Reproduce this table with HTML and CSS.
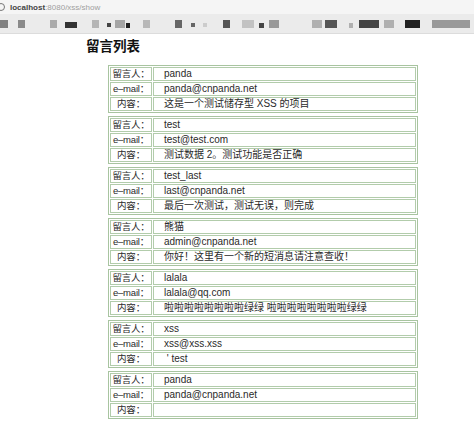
FILE: index.html
```html
<!DOCTYPE html>
<html lang="zh">
<head>
<meta charset="utf-8">
<title>留言列表</title>
<link rel="stylesheet" href="styles.css">
</head>
<body>
<div class="chrome">
  <div class="addr">
    <span class="globe"></span>
    <span class="host">localhost</span><span class="path">:8080/xss/show</span>
  </div>
  <div class="bookmarks">
    <span class="bm b1"></span><span class="bm b2"></span><span class="bm b3"></span><span class="bm b4"></span>
    <span class="bm b5"></span><span class="bm b6"></span><span class="bm b7"></span><span class="bm b8"></span>
    <span class="bm b9"></span><span class="bm b10"></span><span class="bm b11"></span><span class="bm b12"></span>
    <span class="bm b13"></span><span class="bm b14"></span><span class="bm b15"></span><span class="bm b16"></span>
    <span class="bm b17"></span><span class="bm b18"></span><span class="bm b19"></span><span class="bm b20"></span>
    <span class="bm b21"></span><span class="bm b22"></span><span class="bm b23"></span>
  </div>
</div>
<main class="page">
  <h1 class="title">留言列表</h1>
  <div class="list">
    <table class="msg">
      <tr><td class="lab">留言人：</td><td class="val">panda</td></tr>
      <tr><td class="lab">e–mail：</td><td class="val">panda@cnpanda.net</td></tr>
      <tr><td class="lab">内容：</td><td class="val">这是一个测试储存型 XSS 的项目</td></tr>
    </table>
    <table class="msg">
      <tr><td class="lab">留言人：</td><td class="val">test</td></tr>
      <tr><td class="lab">e–mail：</td><td class="val">test@test.com</td></tr>
      <tr><td class="lab">内容：</td><td class="val">测试数据 2。测试功能是否正确</td></tr>
    </table>
    <table class="msg">
      <tr><td class="lab">留言人：</td><td class="val">test_last</td></tr>
      <tr><td class="lab">e–mail：</td><td class="val">last@cnpanda.net</td></tr>
      <tr><td class="lab">内容：</td><td class="val">最后一次测试，测试无误，则完成</td></tr>
    </table>
    <table class="msg">
      <tr><td class="lab">留言人：</td><td class="val">熊猫</td></tr>
      <tr><td class="lab">e–mail：</td><td class="val">admin@cnpanda.net</td></tr>
      <tr><td class="lab">内容：</td><td class="val">你好！这里有一个新的短消息请注意查收！</td></tr>
    </table>
    <table class="msg">
      <tr><td class="lab">留言人：</td><td class="val">lalala</td></tr>
      <tr><td class="lab">e–mail：</td><td class="val">lalala@qq.com</td></tr>
      <tr><td class="lab">内容：</td><td class="val">啦啦啦啦啦啦啦啦绿绿 啦啦啦啦啦啦啦啦绿绿</td></tr>
    </table>
    <table class="msg">
      <tr><td class="lab">留言人：</td><td class="val">xss</td></tr>
      <tr><td class="lab">e–mail：</td><td class="val">xss@xss.xss</td></tr>
      <tr><td class="lab">内容：</td><td class="val">&nbsp;' test</td></tr>
    </table>
    <table class="msg">
      <tr><td class="lab">留言人：</td><td class="val">panda</td></tr>
      <tr><td class="lab">e–mail：</td><td class="val">panda@cnpanda.net</td></tr>
      <tr><td class="lab">内容：</td><td class="val"></td></tr>
    </table>
  </div>
</main>
</body>
</html>
```
FILE: styles.css
```css
html, body {
  margin: 0;
  padding: 0;
  background: #ffffff;
  font-family: "Liberation Sans", "Noto Sans CJK SC", sans-serif;
  color: #2a2a2a;
}

.chrome {
  background: #ebebeb;
  border-bottom: 1px solid #dcdcdc;
}

.addr {
  height: 14px;
  display: flex;
  align-items: center;
  background: #f5f5f5;
  font-size: 8px;
  padding-left: 1px;
}

.globe {
  width: 6px;
  height: 6px;
  border: 1px solid #777;
  border-radius: 50%;
  margin-left: -4px;
  margin-right: 5px;
}

.host {
  color: #444;
  font-weight: bold;
}

.path {
  color: #a0a0a0;
}

.bookmarks {
  position: relative;
  height: 19px;
  filter: blur(0.5px);
}

.bm {
  position: absolute;
  top: 6px;
  width: 7px;
  height: 8px;
  background: #9a9a9a;
}

.b1 { left: 0; width: 8px; background: #808080; }
.b2 { left: 18px; background: #8a8a8a; }
.b3 { left: 50px; background: #aaa; }
.b4 { left: 65px; top: 8px; width: 12px; height: 6px; background: #333; }
.b5 { left: 92px; background: #b5b5b5; }
.b6 { left: 107px; top: 9px; width: 4px; height: 4px; background: #444; }
.b7 { left: 115px; width: 10px; background: #a5a5a5; }
.b8 { left: 126px; top: 9px; width: 4px; height: 5px; background: #222; }
.b9 { left: 143px; background: #b8b8b8; }
.b10 { left: 175px; background: #666; }
.b11 { left: 191px; top: 9px; width: 4px; height: 4px; background: #666; }
.b12 { left: 203px; top: 9px; width: 4px; height: 4px; background: #ccc; }
.b13 { left: 223px; background: #555; }
.b14 { left: 242px; width: 12px; background: #c2c2c2; }
.b15 { left: 259px; top: 9px; width: 5px; height: 5px; background: #444; }
.b16 { left: 269px; width: 10px; background: #999; }
.b17 { left: 312px; width: 10px; background: #b0b0b0; }
.b18 { left: 325px; width: 12px; background: #555; }
.b19 { left: 349px; top: 9px; width: 4px; height: 5px; background: #b0b0b0; }
.b20 { left: 359px; width: 20px; background: #444; }
.b21 { left: 384px; width: 10px; background: #b0b0b0; }
.b22 { left: 405px; width: 15px; background: #222; }
.b23 { left: 432px; width: 38px; background: #999; }

.page {
  padding-top: 4px;
}

.title {
  margin: 0 0 9px 86px;
  font-size: 13.5px;
  line-height: 18px;
  font-weight: bold;
  color: #111;
}

.list {
  margin-left: 108px;
  width: 310px;
  display: flex;
  flex-direction: column;
  gap: 3px;
}

.msg {
  width: 310px;
  table-layout: fixed;
  border: 1px solid #a8c4a0;
  border-spacing: 1px;
  font-size: 10px;
}

.msg td {
  border: 1px solid #b2ccab;
  height: 12px;
  line-height: 12px;
  white-space: nowrap;
}

.lab {
  width: 38px;
  padding: 0 1px;
  text-align: center;
  font-size: 9.5px;
  letter-spacing: -0.2px;
}

.val {
  padding: 0 4px 0 10px;
}
```
